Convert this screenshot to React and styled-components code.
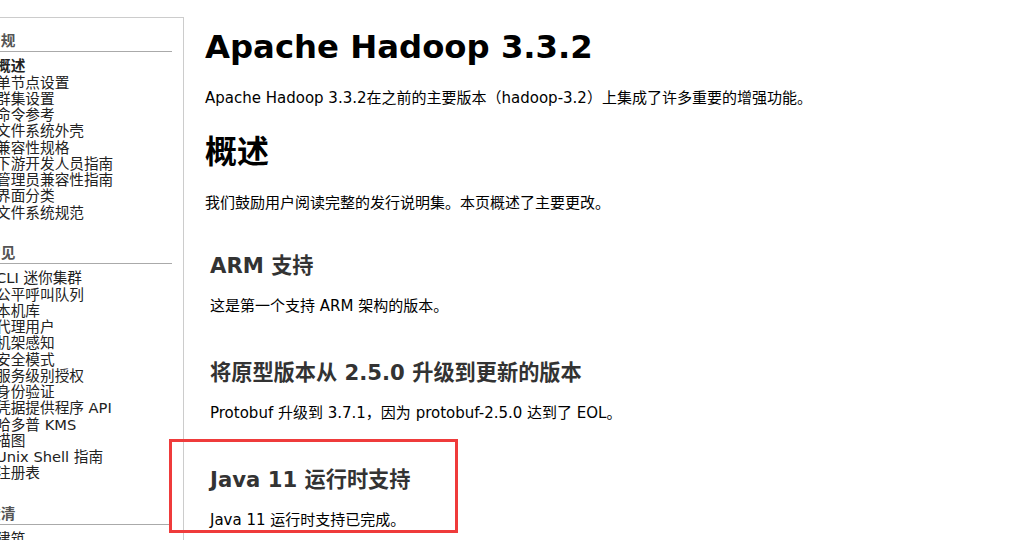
import React from 'react';
import styled, { createGlobalStyle } from 'styled-components';

const Global = createGlobalStyle`
  html, body { margin: 0; padding: 0; background: #fff; overflow: hidden; }
  body {
    font-family: "DejaVu Sans", "Noto Sans CJK SC", sans-serif;
    color: #000;
  }
`;

const Page = styled.div`
  position: relative;
  display: flex;
  align-items: flex-start;
  height: 540px;
  overflow: hidden;
`;

const Sidebar = styled.nav`
  flex: none;
  box-sizing: border-box;
  width: 204px;
  margin-left: -20px;
  margin-top: 17px;
  min-height: 620px;
  border: 1px solid #ccc;
  padding: 15.4px 11px 0 5px;
`;

const NavGroup = styled.div`
  & + & { margin-top: 24.5px; }
`;

const NavTitle = styled.h5`
  margin: 0;
  font-size: 14.67px;
  line-height: 16.25px;
  font-weight: bold;
  color: #555;
  padding-bottom: 1.4px;
  border-bottom: 1px solid #aaa;
  white-space: nowrap;
`;

const NavList = styled.ul`
  list-style: none;
  margin: 6.4px 0 0;
  padding: 0 0 0 10px;
`;

const NavItem = styled.li`
  font-size: 14.67px;
  line-height: 16.25px;
  color: #222;
  white-space: nowrap;
  font-weight: ${(p) => (p.$active ? 'bold' : 'normal')};
`;

const Main = styled.main`
  flex: 1;
  min-width: 0;
  padding-left: 21px;
`;

const Title = styled.h1`
  margin: 28.2px 0 0;
  font-size: 32.3px;
  line-height: 38px;
  font-weight: bold;
  white-space: nowrap;
`;

const SectionTitle = styled.h2`
  margin: 25px 0 0;
  font-size: 32px;
  line-height: 38px;
  font-weight: bold;
`;

const Text = styled.p`
  margin: ${(p) => p.$gap}px 0 0;
  font-size: 15px;
  line-height: 20px;
  white-space: nowrap;
`;

const Sub = styled.section`
  padding-left: 5px;
  margin-top: 44px;
  &:first-of-type { margin-top: 40px; }
`;

const SubTitle = styled.h3`
  margin: 0;
  font-size: 21.2px;
  line-height: 26px;
  font-weight: bold;
  color: #333;
  white-space: nowrap;
`;

const Highlight = styled.div`
  position: absolute;
  left: 169px;
  top: 439px;
  width: 289px;
  height: 94px;
  box-sizing: border-box;
  border: 3px solid #ef3b3b;
  pointer-events: none;
`;

const groups = [
  {
    title: '常规',
    items: ['概述', '单节点设置', '群集设置', '命令参考', '文件系统外壳', '兼容性规格', '下游开发人员指南', '管理员兼容性指南', '界面分类', '文件系统规范'],
    active: 0,
  },
  {
    title: '常见',
    items: ['CLI 迷你集群', '公平呼叫队列', '本机库', '代理用户', '机架感知', '安全模式', '服务级别授权', '身份验证', '凭据提供程序 API', '哈多普 KMS', '描图', 'Unix Shell 指南', '注册表'],
  },
  {
    title: '澄清',
    items: ['建筑', '用户指南'],
  },
];

const sections = [
  { title: 'ARM 支持', text: '这是第一个支持 ARM 架构的版本。' },
  { title: '将原型版本从 2.5.0 升级到更新的版本', text: 'Protobuf 升级到 3.7.1，因为 protobuf-2.5.0 达到了 EOL。' },
  { title: 'Java 11 运行时支持', text: 'Java 11 运行时支持已完成。' },
];

export default function App() {
  return (
    <>
      <Global />
      <Page>
        <Sidebar>
          {groups.map((g) => (
            <NavGroup key={g.title}>
              <NavTitle>{g.title}</NavTitle>
              <NavList>
                {g.items.map((it, i) => (
                  <NavItem key={it} $active={g.active === i}>{it}</NavItem>
                ))}
              </NavList>
            </NavGroup>
          ))}
        </Sidebar>
        <Main>
          <Title>Apache Hadoop 3.3.2</Title>
          <Text $gap={22.3}>Apache Hadoop 3.3.2在之前的主要版本（hadoop-3.2）上集成了许多重要的增强功能。</Text>
          <SectionTitle>概述</SectionTitle>
          <Text $gap={21.9}>我们鼓励用户阅读完整的发行说明集。本页概述了主要更改。</Text>
          {sections.map((s) => (
            <Sub key={s.title}>
              <SubTitle>{s.title}</SubTitle>
              <Text $gap={17}>{s.text}</Text>
            </Sub>
          ))}
        </Main>
        <Highlight />
      </Page>
    </>
  );
}
